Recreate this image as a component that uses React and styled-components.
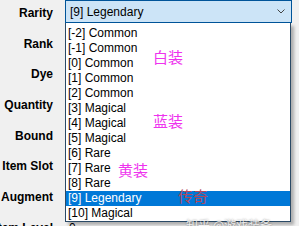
import React from "react";
import styled, { createGlobalStyle } from "styled-components";

const Global = createGlobalStyle`
  html, body { margin: 0; padding: 0; }
  body {
    background: #f0f0f0;
    font-family: "Liberation Sans", Arial, sans-serif;
    overflow: hidden;
  }
`;

const Page = styled.div`
  position: relative;
  width: 299px;
  height: 226px;
  overflow: hidden;
  background: #f0f0f0;
`;

const Form = styled.div`
  display: grid;
  grid-template-columns: 53px 227px;
  grid-auto-rows: 30.7px;
  column-gap: 12px;
  margin-top: -2.3px;
`;

const Label = styled.div`
  align-self: center;
  text-align: right;
  white-space: nowrap;
  font-weight: bold;
  font-size: 12px;
  color: #000;
  direction: rtl;
`;

const Field = styled.div`
  position: relative;
  align-self: ${(p) => (p.$top ? "start" : "center")};
  margin-top: ${(p) => (p.$top ? "2.3px" : "0")};
  font-size: 12px;
  color: #000;
  z-index: ${(p) => (p.$top ? 2 : 0)};
`;

const Value = styled.div`
  padding-left: 4px;
`;

const Combo = styled.div`
  display: flex;
  align-items: center;
  justify-content: space-between;
  box-sizing: border-box;
  height: 23px;
  padding: 0 6px 0 4px;
  background: #cce4f7;
  border: 1px solid #005499;
  font-size: 12px;
`;

const Dropdown = styled.div`
  position: absolute;
  top: 23px;
  left: 0;
  width: 226px;
  box-sizing: border-box;
  background: #fff;
  border: 1px solid #2b4a66;
  border-top: none;
  padding-top: 3px;
  box-shadow: 3px 3px 3px rgba(0, 0, 0, 0.28);
`;

const Item = styled.div`
  height: 15px;
  line-height: 15px;
  padding-left: 2px;
  font-size: 12px;
  white-space: nowrap;
  background: ${(p) => (p.$selected ? "#0078d7" : "transparent")};
  color: ${(p) => (p.$selected ? "#fff" : "#000")};
`;

const Note = styled.div`
  position: absolute;
  font-family: "Noto Sans CJK SC", sans-serif;
  font-size: 15px;
  line-height: 17px;
  color: ${(p) => p.$color || "#ee33ee"};
  pointer-events: none;
`;

const Watermark = styled.div`
  position: absolute;
  left: 186px;
  top: 216px;
  font-family: "Noto Sans CJK SC", sans-serif;
  font-size: 12px;
  color: rgba(255, 255, 255, 0.85);
  text-shadow: 0 0 2px rgba(0, 0, 0, 0.45);
  white-space: nowrap;
  z-index: 3;
`;

const items = [
  "[-2] Common",
  "[-1] Common",
  "[0] Common",
  "[1] Common",
  "[2] Common",
  "[3] Magical",
  "[4] Magical",
  "[5] Magical",
  "[6] Rare",
  "[7] Rare",
  "[8] Rare",
  "[9] Legendary",
  "[10] Magical",
];

const labels = ["Rank", "Dye", "Quantity", "Bound", "Item Slot", "Augment"];

export default function App() {
  return (
    <Page>
      <Global />
      <Form>
        <Label>Rarity</Label>
        <Field $top>
          <Combo>
            <span>[9] Legendary</span>
            <svg width="8" height="5" viewBox="0 0 8 5">
              <polyline points="0.5,0.5 4,4 7.5,0.5" fill="none" stroke="#444" strokeWidth="1" />
            </svg>
          </Combo>
          <Dropdown>
            {items.map((t) => (
              <Item key={t} $selected={t === "[9] Legendary"}>
                {t}
              </Item>
            ))}
            <Note style={{ left: 87, top: 25 }}>白装</Note>
            <Note style={{ left: 87, top: 89 }}>蓝装</Note>
            <Note style={{ left: 52, top: 138 }}>黄装</Note>
            <Note style={{ left: 112, top: 164 }} $color="#b0485e">传奇</Note>
          </Dropdown>
        </Field>
        {labels.map((l) => (
          <React.Fragment key={l}>
            <Label>{l}</Label>
            <Field />
          </React.Fragment>
        ))}
        <Label>Item Level</Label>
        <Field>
          <Value>0</Value>
        </Field>
      </Form>
      <Watermark>知乎 @游戏装备</Watermark>
    </Page>
  );
}
